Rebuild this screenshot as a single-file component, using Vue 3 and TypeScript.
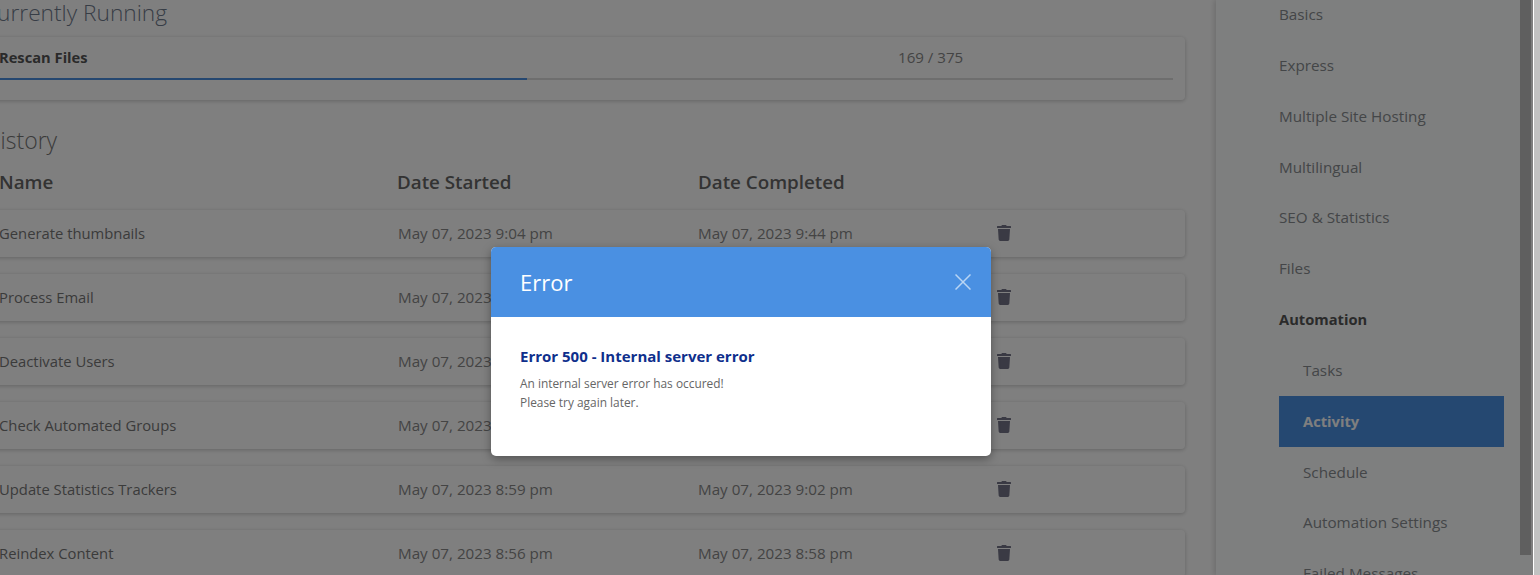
<script setup lang="ts">
interface Row { name: string; started: string; completed: string }
interface NavItem { label: string; sub?: boolean; strong?: boolean; active?: boolean }

const rows: Row[] = [
  { name: 'Generate thumbnails', started: 'May 07, 2023 9:04 pm', completed: 'May 07, 2023 9:44 pm' },
  { name: 'Process Email', started: 'May 07, 2023 9:03 pm', completed: 'May 07, 2023 9:04 pm' },
  { name: 'Deactivate Users', started: 'May 07, 2023 9:02 pm', completed: 'May 07, 2023 9:03 pm' },
  { name: 'Check Automated Groups', started: 'May 07, 2023 9:01 pm', completed: 'May 07, 2023 9:02 pm' },
  { name: 'Update Statistics Trackers', started: 'May 07, 2023 8:59 pm', completed: 'May 07, 2023 9:02 pm' },
  { name: 'Reindex Content', started: 'May 07, 2023 8:56 pm', completed: 'May 07, 2023 8:58 pm' },
]

const nav: NavItem[] = [
  { label: 'Basics' },
  { label: 'Express' },
  { label: 'Multiple Site Hosting' },
  { label: 'Multilingual' },
  { label: 'SEO & Statistics' },
  { label: 'Files' },
  { label: 'Automation', strong: true },
  { label: 'Tasks', sub: true },
  { label: 'Activity', sub: true, active: true },
  { label: 'Schedule', sub: true },
  { label: 'Automation Settings', sub: true },
  { label: 'Failed Messages', sub: true },
]

const progress = Math.floor((169 / 375) * 100)
</script>

<template>
  <div class="window">
    <div class="page">
      <main class="main">
        <h2 class="heading running-heading">Currently Running</h2>
        <section class="running-card">
          <div class="running-top">
            <strong class="task-name">Rescan Files</strong>
            <span class="task-count">169 / 375</span>
          </div>
          <div class="bar"><div class="bar-fill" :style="{ width: progress + '%' }"></div></div>
        </section>

        <h2 class="heading history-heading">History</h2>
        <div class="table-head">
          <span class="col-name">Name</span>
          <span class="col-start">Date Started</span>
          <span class="col-end">Date Completed</span>
        </div>
        <div class="rows">
          <div v-for="row in rows" :key="row.name" class="row">
            <span class="col-name">{{ row.name }}</span>
            <span class="col-start date date-start">{{ row.started }}</span>
            <span class="col-end date">{{ row.completed }}</span>
            <svg class="trash" viewBox="0 0 448 512" aria-hidden="true">
              <path d="M432 32H312l-9.4-18.7A24 24 0 0 0 281.1 0H166.8a23.72 23.72 0 0 0-21.4 13.3L136 32H16A16 16 0 0 0 0 48v32a16 16 0 0 0 16 16h416a16 16 0 0 0 16-16V48a16 16 0 0 0-16-16zM53.2 467a48 48 0 0 0 47.9 45h245.8a48 48 0 0 0 47.9-45L416 128H32z" />
            </svg>
          </div>
        </div>
      </main>

      <aside class="side">
        <ul class="nav">
          <li
            v-for="item in nav"
            :key="item.label"
            class="nav-item"
            :class="{ sub: item.sub, strong: item.strong, active: item.active }"
          >{{ item.label }}</li>
        </ul>
      </aside>

      <div class="inner-scroll"><div class="inner-thumb"></div></div>

      <div class="overlay">
        <div class="modal">
          <header class="modal-head">
            <span class="modal-title">Error</span>
            <svg class="close" viewBox="0 0 16 16" aria-hidden="true">
              <path d="M0.5 0.5 15.5 15.5M15.5 0.5 0.5 15.5" />
            </svg>
          </header>
          <div class="modal-body">
            <h3 class="modal-h">Error 500 - Internal server error</h3>
            <p class="modal-p">An internal server error has occured!<br />Please try again later.</p>
          </div>
        </div>
      </div>
    </div>
    <div class="gap"></div>
    <div class="os-scroll"></div>
  </div>
</template>

<style>
html, body { margin: 0; overflow: hidden; background: #fff; }
</style>

<style scoped>
.window {
  width: 1540px;
  height: 575px;
  display: flex;
  overflow: hidden;
  font-family: "Open Sans", "Noto Sans", sans-serif;
}
.page {
  position: relative;
  width: 1533px;
  height: 575px;
  display: flex;
  overflow: hidden;
  background: #fff;
}
.gap { width: 1px; background: #fff; }
.os-scroll { width: 6px; background: #c2c2c2; }

.main {
  width: 1202px;
  flex: none;
  margin-left: -17px;
  margin-right: 31px;
  margin-top: -6px;
}
.heading {
  margin: 0;
  font-weight: 300;
  font-size: 22.7px;
  line-height: 38px;
  color: #6f7a8c;
}
.history-heading { margin-top: 21px; padding-left: 1px; font-size: 23px; color: #777; }

.running-card {
  margin-top: 5px;
  height: 63px;
  box-sizing: border-box;
  padding: 8px 12px 0 16px;
  border-radius: 4px;
  box-shadow: 0 1px 4px rgba(0, 0, 0, 0.22);
}
.running-top {
  display: flex;
  height: 24px;
  line-height: 24px;
  position: relative;
}
.task-name { font-size: 14.7px; font-weight: 700; color: #555; width: 899px; }
.task-count { font-size: 15.1px; color: #888; }
.bar { margin-top: 9px; height: 2px; background: #ddd; }
.bar-fill { height: 100%; background: #4a8fe0; }

.table-head {
  display: flex;
  margin-top: 5px;
  height: 36px;
  align-items: center;
  padding: 0 16px;
  font-size: 18.8px;
  font-weight: 600;
  color: #666;
}
.col-name { width: 398px; flex: none; }
.col-start { width: 301px; flex: none; }
.col-end { width: 299px; flex: none; }
.rows {
  display: flex;
  flex-direction: column;
  gap: 17px;
  margin-top: 10px;
}
.row {
  display: flex;
  align-items: center;
  height: 47px;
  box-sizing: border-box;
  padding: 0 16px 2px;
  font-size: 14.8px;
  color: #777;
  border-radius: 4px;
  box-shadow: 0 1px 4px rgba(0, 0, 0, 0.22);
}
.date { color: #888; font-size: 15.2px; white-space: nowrap; }
.date-start { padding-left: 1px; box-sizing: border-box; }
.trash { width: 14px; height: 16px; fill: #747488; }

.side {
  width: 304px;
  flex: none;
  height: 575px;
  background: #fdfffe;
  box-shadow: -2px 0 5px rgba(0, 0, 0, 0.14);
}
.nav {
  list-style: none;
  margin: -11px 0 0;
  padding: 0 16px 0 63px;
}
.nav-item {
  height: 50.85px;
  line-height: 50.85px;
  font-size: 15.25px;
  color: #888c90;
  white-space: nowrap;
}
.nav-item.sub { padding-left: 24px; }
.nav-item.strong { font-weight: 700; font-size: 14.7px; color: #555; }
.nav-item.active { background: #4a90e2; font-weight: 700; font-size: 14.7px; color: #fff; }

.inner-scroll {
  width: 12px;
  flex: none;
  background: #fdfffe;
}
.inner-thumb { height: 555px; background: #bfbfbf; margin-right: 1px; }

.overlay {
  position: absolute;
  inset: 0;
  background: rgba(0, 0, 0, 0.5);
}
.modal {
  position: absolute;
  left: 491px;
  top: 247px;
  width: 500px;
  height: 209px;
  background: #fff;
  border-radius: 5px;
  overflow: hidden;
  box-shadow: 0 3px 10px rgba(0, 0, 0, 0.35);
}
.modal-head {
  height: 70px;
  background: #4a90e2;
  display: flex;
  align-items: center;
  justify-content: space-between;
  padding: 0 20px 0 29px;
}
.modal-title { font-size: 22px; color: #fff; }
.close { width: 16px; height: 16px; fill: none; stroke: #b9d5f4; stroke-width: 1.5; }
.modal-body { padding: 29px 29px 0; }
.modal-h { margin: 0; font-size: 15px; line-height: 20px; font-weight: 700; color: #0f2f8c; }
.modal-p { margin: 8px 0 0; font-size: 11.9px; line-height: 19px; color: #666; }
</style>
